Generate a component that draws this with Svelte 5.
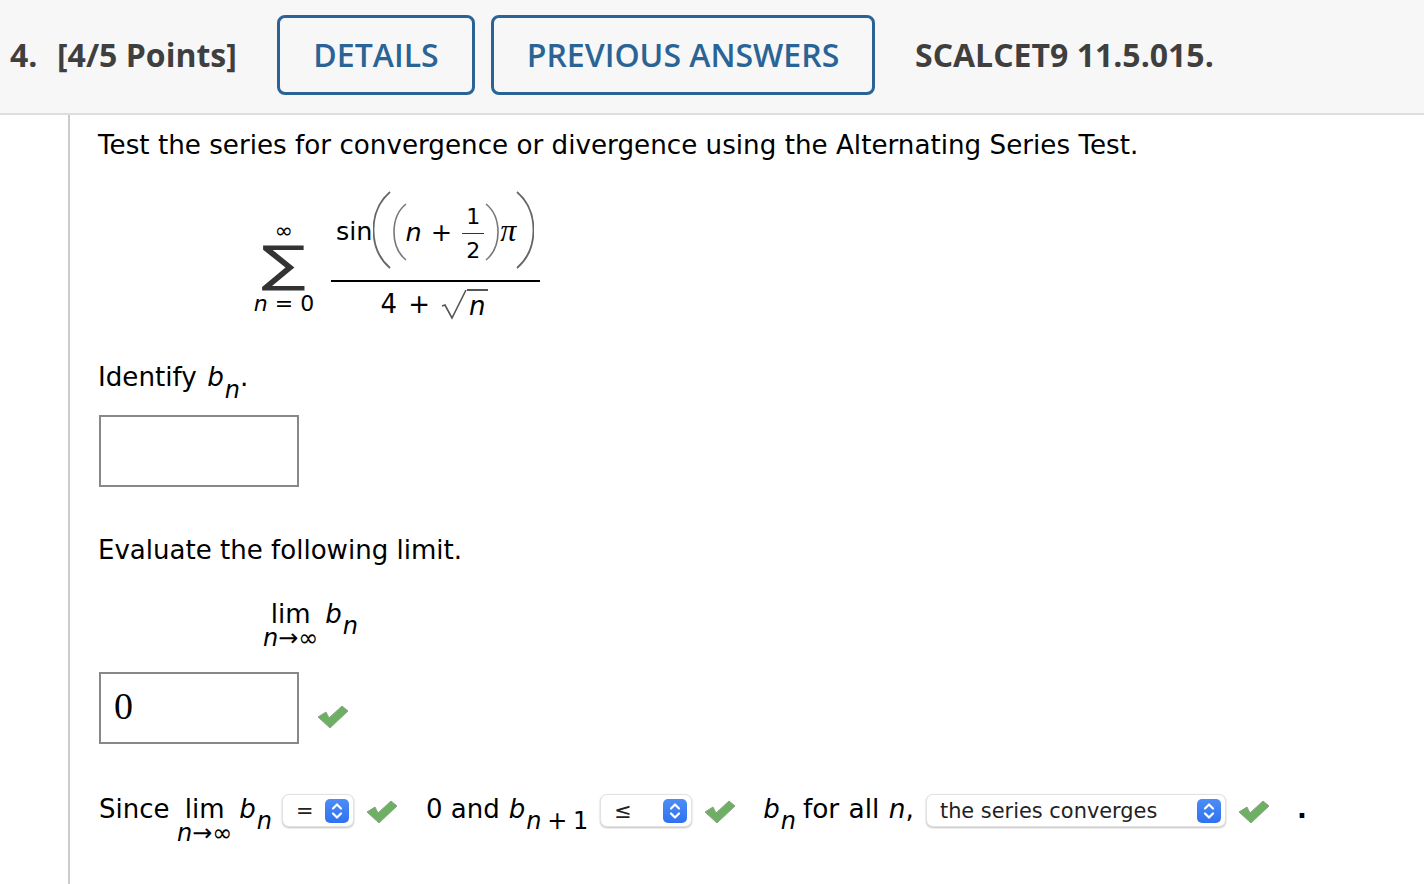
<script>
    const chevrons = 'M5 9.5 9 5.5l4 4M5 14.5 9 18.5l4-4';
</script>

{#snippet check()}
    <svg class="check" width="32" height="24" viewBox="0 0 32 24">
        <polygon points="1,12 9,7 12,13 25,1 31,6 13,23" fill="#6eb063" stroke="#8aa585" stroke-width="1" stroke-linejoin="round" />
    </svg>
{/snippet}

{#snippet select(label, cls)}
    <div class="select {cls}">
        <span class="sel-text">{label}</span>
        <span class="stepper">
            <svg width="18" height="24" viewBox="0 0 18 24">
                <path d={chevrons} fill="none" stroke="#fff" stroke-width="2.2" stroke-linecap="round" stroke-linejoin="round" />
            </svg>
        </span>
    </div>
{/snippet}

{#snippet lim()}
    <span class="lim">
        <span class="lim-word">lim</span>
        <span class="lim-under"><i>n</i>→∞</span>
    </span>
{/snippet}

<div class="page">
    <header class="top">
        <span class="num">4.</span>
        <span class="points">[4/5 Points]</span>
        <button class="btn details">DETAILS</button>
        <button class="btn prev">PREVIOUS ANSWERS</button>
        <span class="ref">SCALCET9 11.5.015.</span>
    </header>

    <main class="body">
        <p class="lead">Test the series for convergence or divergence using the Alternating Series Test.</p>

        <div class="series">
            <div class="sigma">
                <span class="inf">∞</span>
                <span class="sum">∑</span>
                <span class="from"><i>n</i> = 0</span>
            </div>
            <div class="frac">
                <div class="numer">
                    <span class="sin">sin</span>
                    <svg class="paren" width="18" height="78" viewBox="0 0 18 78"><path d="M17 1C-5 20 -5 58 17 77" fill="none" stroke="#666" stroke-width="1.8" /></svg>
                    <svg class="paren small" width="14" height="58" viewBox="0 0 14 58"><path d="M13 1C-3 14 -3 44 13 57" fill="none" stroke="#777" stroke-width="1.6" /></svg>
                    <span class="n-plus"><i>n</i> +</span>
                    <span class="half"><span>1</span><span class="half-bar"></span><span>2</span></span>
                    <svg class="paren small closing" width="14" height="58" viewBox="0 0 14 58"><path d="M1 1C17 14 17 44 1 57" fill="none" stroke="#777" stroke-width="1.6" /></svg>
                    <span class="pi">π</span>
                    <svg class="paren" width="18" height="78" viewBox="0 0 18 78"><path d="M1 1C23 20 23 58 1 77" fill="none" stroke="#666" stroke-width="1.8" /></svg>
                </div>
                <div class="denom">
                    <span class="four">4 +</span>
                    <span class="root">
                        <svg width="26" height="31" viewBox="0 0 26 31"><path d="M1 17l3-1 7 13L25 1" fill="none" stroke="#555" stroke-width="1.6" /></svg>
                        <i class="radicand">n</i>
                    </span>
                </div>
            </div>
        </div>

        <p class="identify">Identify <i>b</i><sub><i>n</i></sub>.</p>
        <div class="answer"></div>

        <p class="evaluate">Evaluate the following limit.</p>
        <div class="limit-line">
            {@render lim()}
            <span class="b"><i>b</i></span>
            <span class="sub"><i>n</i></span>
        </div>
        <div class="answer-row">
            <div class="answer filled">0</div>
            {@render check()}
        </div>

        <div class="since">
            <span class="w-since">Since</span>
            {@render lim()}
            <span class="b"><i>b</i></span>
            <span class="sub"><i>n</i></span>
            {@render select('=', 'sel-eq')}
            {@render check()}
            <span class="w-and">0 and</span>
            <span class="b b2"><i>b</i></span>
            <span class="sub sub-long"><i>n</i> + 1</span>
            {@render select('≤', 'sel-le')}
            {@render check()}
            <span class="b b3"><i>b</i></span>
            <span class="sub"><i>n</i></span>
            <span class="w-for">for all <i>n</i>,</span>
            {@render select('the series converges', 'sel-conv')}
            {@render check()}
            <span class="dot">.</span>
        </div>
    </main>
</div>

<style>
    :global(body) {
        margin: 0;
        background: #fff;
    }

    .page {
        width: 1424px;
        height: 884px;
        overflow: hidden;
        display: flex;
        flex-direction: column;
        font-family: "DejaVu Sans", Verdana, sans-serif;
        color: #000;
    }

    .top {
        height: 115px;
        box-sizing: border-box;
        flex: none;
        display: flex;
        align-items: center;
        background: #f7f7f7;
        border-bottom: 2px solid #dedede;
        padding: 0 0 3px 10px;
        font-family: "Open Sans", sans-serif;
        font-weight: 700;
        font-size: 32px;
        color: #3f3f3f;
    }

    .num,
    .points,
    .ref {
        padding-bottom: 2px;
    }

    .num {
        width: 47px;
    }

    .points {
        width: 220px;
    }

    .btn {
        height: 80px;
        box-sizing: border-box;
        border: 3px solid #2a6496;
        border-radius: 8px;
        background: transparent;
        color: #2a6496;
        font-family: "Open Sans", sans-serif;
        font-weight: 600;
        font-size: 32px;
        padding: 0 0 2px;
    }

    .details {
        width: 198px;
        margin-right: 16px;
    }

    .prev {
        width: 384px;
        margin-right: 40px;
    }

    .body {
        flex: 1;
        margin-left: 68px;
        border-left: 2px solid #ccc;
        padding-left: 28px;
    }

    p {
        margin: 0;
    }

    .lead {
        margin-top: 14px;
        font-size: 26.2px;
        line-height: 32px;
        white-space: nowrap;
    }

    .series {
        display: flex;
        margin-top: 28px;
        margin-left: 154px;
        height: 139px;
    }

    .sigma {
        width: 64px;
        display: flex;
        flex-direction: column;
        align-items: center;
        padding-top: 31px;
        margin-right: 15px;
    }

    .inf {
        font-size: 22px;
        line-height: 22px;
    }

    .sum {
        font-size: 44px;
        line-height: 44px;
        height: 46px;
        color: #333;
        transform: scale(1.5, 1.12);
    }

    .from {
        font-size: 22px;
        line-height: 24px;
        white-space: nowrap;
        margin-top: 4px;
    }

    .frac {
        width: 209px;
    }

    .numer {
        height: 91px;
        border-bottom: 2px solid #000;
        display: flex;
        align-items: center;
        padding-left: 5px;
        font-size: 25.5px;
    }

    .sin {
        margin-top: -8px;
    }

    .paren {
        flex: none;
        margin-top: -9px;
    }

    .paren.small {
        margin: -6px 0 0 2px;
    }

    .paren.closing {
        margin-left: 0;
    }

    .n-plus {
        margin-top: -6px;
        margin-left: -1px;
        white-space: nowrap;
        word-spacing: 1px;
    }

    .half {
        display: flex;
        flex-direction: column;
        align-items: center;
        width: 24px;
        margin: -2px 0 0 9px;
        font-size: 22px;
        line-height: 27px;
    }

    .half-bar {
        width: 22px;
        height: 1px;
        margin: 3px 0;
        background: #333;
    }

    .pi {
        font-family: "Liberation Serif", serif;
        font-style: italic;
        font-size: 32px;
        margin-top: -8px;
        margin-left: 1px;
    }

    .denom {
        display: flex;
        justify-content: center;
        align-items: flex-end;
        gap: 11px;
        height: 44px;
        font-size: 26px;
        line-height: 44px;
        padding-right: 3px;
    }

    .four {
        word-spacing: 3px;
    }

    .root {
        display: flex;
        align-items: flex-end;
        position: relative;
        top: -1px;
    }

    .root svg {
        margin-bottom: 5px;
    }

    .radicand {
        border-top: 2px solid #555;
        line-height: 30px;
        height: 32px;
        box-sizing: border-box;
        padding: 0 2px;
        margin-bottom: 4px;
    }

    .identify {
        margin-top: 31px;
        font-size: 26.2px;
        line-height: 36px;
        word-spacing: 2px;
    }

    sub {
        font-size: 24px;
        line-height: 0;
        vertical-align: -12px;
        margin-left: 1px;
    }

    .answer {
        width: 200px;
        height: 72px;
        margin-top: 20px;
        margin-left: 1px;
        box-sizing: border-box;
        border: 2px solid #888;
        background: #fff;
    }

    .filled {
        margin-top: 0;
        padding-left: 13px;
        font-family: "Liberation Serif", serif;
        font-size: 38px;
        line-height: 64px;
    }

    .evaluate {
        margin-top: 47px;
        font-size: 26.05px;
        line-height: 32px;
    }

    .limit-line {
        display: flex;
        margin-top: 33px;
        margin-left: 165px;
        height: 61px;
        font-size: 26px;
    }

    .lim {
        display: flex;
        flex-direction: column;
        align-items: center;
        line-height: 30px;
    }

    .lim-under {
        font-size: 24px;
        line-height: 18px;
        white-space: nowrap;
    }

    .b {
        margin-left: 7px;
        font-size: 26px;
        line-height: 30px;
    }

    .sub {
        font-size: 24px;
        line-height: 30px;
        margin-top: 12px;
        margin-left: 1px;
        white-space: nowrap;
    }

    .sub-long {
        word-spacing: -2px;
    }

    .answer-row {
        display: flex;
        align-items: center;
        gap: 18px;
        margin-top: 12px;
    }

    .answer-row .check {
        margin-top: 18px;
    }

    .since {
        display: flex;
        align-items: flex-start;
        margin: 50px 0 0 1px;
        font-size: 26px;
        line-height: 30px;
        white-space: nowrap;
    }

    .w-since {
        width: 78px;
    }

    .select {
        flex: none;
        height: 33px;
        box-sizing: border-box;
        display: flex;
        align-items: center;
        justify-content: space-between;
        background: #fff;
        border: 1px solid #e2e2e2;
        border-radius: 7px;
        box-shadow: 0 1px 2px rgba(0, 0, 0, 0.25);
        padding: 0 4px 0 13px;
        font-size: 20.9px;
        color: #222;
        margin-left: 12px;
    }

    .sel-eq {
        width: 72px;
        margin-left: 10px;
    }

    .sel-le {
        width: 92px;
    }

    .sel-conv {
        width: 300px;
    }

    .stepper {
        width: 24px;
        height: 24px;
        flex: none;
        border-radius: 5px;
        background: linear-gradient(#4c8df6, #2f72ef);
        display: flex;
        justify-content: center;
    }

    .since .check {
        flex: none;
        margin: 6px 0 0 12px;
    }

    .w-and {
        margin-left: 28px;
    }

    .b2 {
        margin-left: 9px;
    }

    .b3 {
        margin-left: 27px;
    }

    .w-for {
        margin-left: 7px;
        font-size: 26.4px;
        word-spacing: 1px;
    }

    .dot {
        margin-left: 27px;
        font-weight: 700;
    }
</style>
